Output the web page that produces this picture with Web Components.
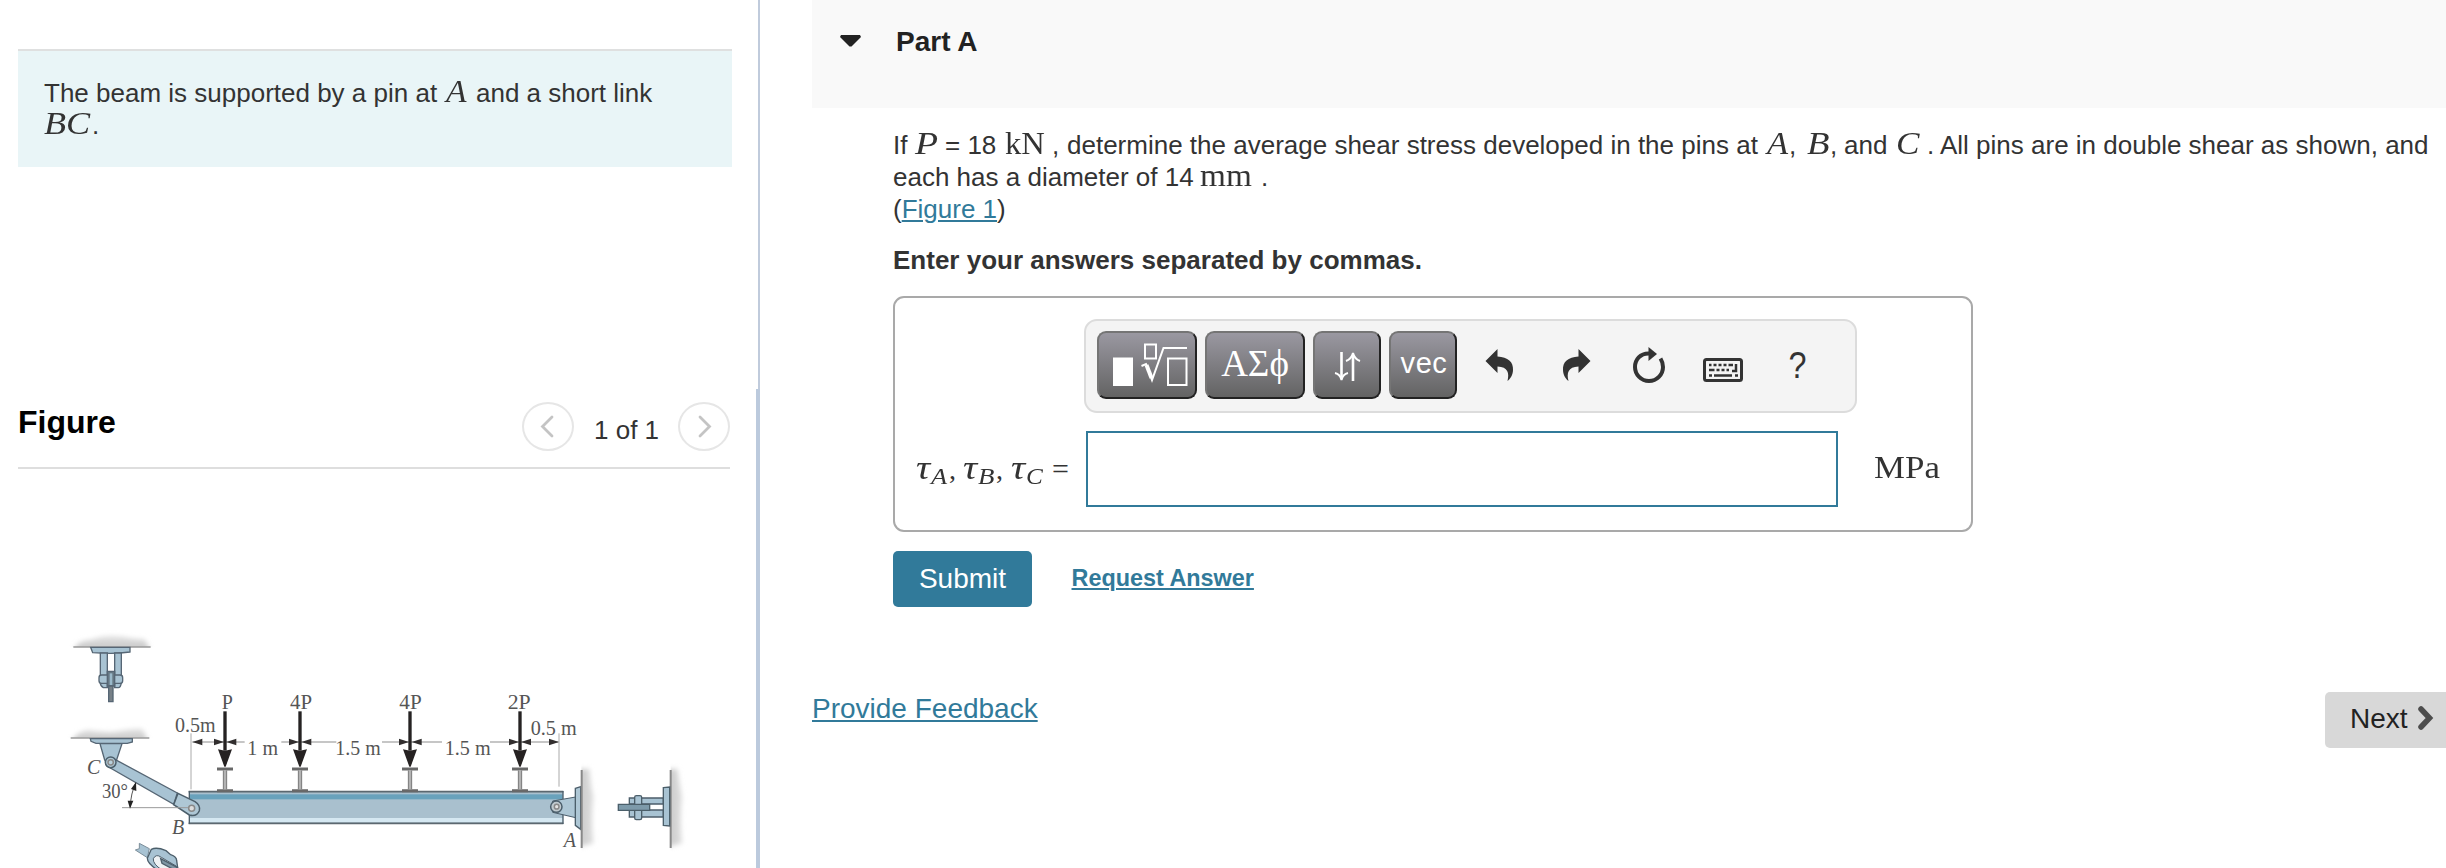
<!DOCTYPE html>
<html lang="en">
<head>
<meta charset="utf-8">
<title>Part A</title>
<style>
html,body{margin:0;padding:0;background:#fff}
body{width:2446px;height:868px;overflow:hidden;font-family:"Liberation Sans",Arial,sans-serif;font-size:26px;color:#333}
</style>
</head>
<body>
<problem-page></problem-page>
<script>
const def=(name,html,after)=>{
  const t=document.createElement('template');t.innerHTML=html;
  customElements.define(name,class extends HTMLElement{
    constructor(){super();this.attachShadow({mode:'open'}).append(t.content.cloneNode(true));}
    connectedCallback(){if(after)after(this);}
  });
};

/* Inline run with a fixed advance, optionally stretched (math symbols). */
def('math-run',`<style>
:host{display:inline-block;white-space:pre;line-height:0}
:host([m]) span{font-family:"Liberation Serif","Times New Roman",serif;font-size:32px}
:host([i]) span{font-style:italic}
span{display:inline-block;transform-origin:0 100%;line-height:0}
</style><span><slot></slot></span>`,el=>{
  el.style.width=el.getAttribute('w')+'px';
  const s=el.shadowRoot.querySelector('span');
  if(el.hasAttribute('x'))s.style.transform='scaleX('+el.getAttribute('x')+')';
  if(el.hasAttribute('s')){s.style.fontSize=el.getAttribute('s')+'px';el.style.fontSize=el.getAttribute('s')+'px';}
});

def('text-link',`<style>
:host{display:inline;color:#317a9a}
a{color:inherit;text-decoration:underline;text-decoration-thickness:2px;text-underline-offset:2px;text-decoration-skip-ink:auto}
</style><a><slot></slot></a>`);

def('intro-card',`<style>
:host{display:block;box-sizing:border-box;height:118px;margin:0 26px 0 18px;border-top:2px solid #dfe0e0;background:#e9f5f7;padding:26px 26px 0;line-height:32px}
div{height:32px;white-space:nowrap}
</style><div><slot name="one"></slot></div><div><slot name="two"></slot></div>`);

def('round-button',`<style>
:host{display:block;box-sizing:border-box;width:52px;height:49px;border:2px solid #e6e6e6;border-radius:50%}
:host([dir=next]) svg{transform:scaleX(-1)}
svg{display:block}
</style><svg width="48" height="45" viewBox="0 0 48 45"><path d="M28 13L18.500 22.500L28 32" fill="none" stroke="#c4c4c4" stroke-width="2.800" stroke-linecap="round"/></svg>`);

def('figure-header',`<style>
:host{display:flex;box-sizing:border-box;margin:0 26px 0 18px;height:67px;border-bottom:2px solid #dedede;align-items:flex-start}
h2{margin:2px 0 0;font-size:32px;line-height:37px;color:#000;flex:1}
span{margin:12px 19px 0 20px;line-height:32px;width:65px;white-space:nowrap}
</style><h2>Figure</h2><round-button></round-button><span>1 of 1</span><round-button dir="next"></round-button>`);

def('beam-figure',`<style>
:host{display:block;margin-left:40px;width:700px;height:248px;overflow:hidden}
svg{display:block}
text{font-family:"Liberation Serif","Times New Roman",serif;fill:#555;font-size:60px}
</style>
<svg width="700" height="248" viewBox="0 0 2100 744">
<defs>
<linearGradient id="fd" x1="0" y1="0" x2="0" y2="1"><stop offset="0" stop-color="#e4e4e4"/><stop offset="1" stop-color="#c2c2c2"/></linearGradient>
<linearGradient id="fr" x1="0" y1="0" x2="1" y2="0"><stop offset="0" stop-color="#c6c6c6"/><stop offset="1" stop-color="#dedede"/></linearGradient>
<filter id="soft" x="-5%" y="-5%" width="110%" height="110%"><feGaussianBlur stdDeviation="2"/></filter>
<filter id="haze" x="-40%" y="-60%" width="180%" height="220%"><feGaussianBlur stdDeviation="8"/></filter>
<g id="load">
<rect x="-5" y="274" width="10" height="118" fill="#262324"/><path d="M-21 388L0 392L21 388L2 440H-2Z" fill="#262324"/>
<path d="M-24 447H24M-24 512H24" stroke="#686868" stroke-width="9"/><path d="M0 451V508" stroke="#858585" stroke-width="13"/><path d="M0 451V508" stroke="#bcbcbc" stroke-width="5"/>
</g>
<path id="ar" d="M0 0L-30 -10V10Z" fill="#302e2e"/>
<path id="al" d="M0 0L30 -10V10Z" fill="#302e2e"/>
<clipPath id="c1"><rect x="60" y="0" width="310" height="81"/></clipPath>
<clipPath id="c2"><rect x="60" y="270" width="310" height="83"/></clipPath>
<clipPath id="c3"><rect x="1624" y="410" width="90" height="300"/></clipPath>
<clipPath id="c4"><rect x="1892" y="410" width="90" height="300"/></clipPath>
</defs>
<g clip-path="url(#c1)"><path filter="url(#haze)" d="M102 92Q112 60 150 60Q170 54 186 50Q215 46 250 50Q290 58 312 58Q322 66 328 92Z" fill="url(#fd)"/></g>
<g clip-path="url(#c2)"><path filter="url(#haze)" d="M96 366Q106 336 145 330Q190 338 220 336Q270 326 305 326Q318 340 322 366Z" fill="url(#fd)"/></g>
<g clip-path="url(#c3)"><path filter="url(#haze)" d="M1610 448L1648 446Q1652 500 1660 530Q1652 600 1660 670L1610 682Z" fill="url(#fr)"/></g>
<g clip-path="url(#c4)"><path filter="url(#haze)" d="M1878 448L1912 446Q1920 500 1926 530Q1918 600 1926 670L1878 682Z" fill="url(#fr)"/></g>
<g filter="url(#soft)">
<path d="M100 81H332M92 354H328" stroke="#999" stroke-width="4"/>
<g stroke="#566674" stroke-width="4" fill="#a8c3d3">
<path d="M152 82H270V96Q240 100 212 100T158 98Z"/>
<path d="M181 99H202V203H190Q181 198 181 188ZM224 99H244V188Q242 203 235 203H224Z"/>
<rect x="177" y="165" width="71" height="25" rx="8"/>
<path d="M202 154H224V198H202Z" fill="#657783"/><path d="M209 160H217V195H209Z" fill="#9ab9ca" stroke="none"/>
<path d="M206 198H219V245H206Z" fill="#778087"/>
<path d="M151 356H277V366L262 370H168L153 364Z"/>
<path d="M180 371H246L228 425Q218 440 202 433L194 420Z"/>
<path d="M219 415L412 519L401 553L206 441Z"/>
</g>
<rect x="448" y="515" width="1121" height="95" fill="#a9c0ce"/>
<rect x="448" y="523" width="1120" height="15" fill="#69a2bc"/><rect x="448" y="594" width="1120" height="13" fill="#d5e8f2"/>
<path d="M446 515H1570M446 610H1570" stroke="#5c686f" stroke-width="5"/>
<path d="M448 513V612M1569 513V612" stroke="#4c5e6b" stroke-width="4"/>
<g stroke="#4c5e6b" stroke-width="4.500" fill="#aec7d5">
<path d="M414 520L465 545Q482 556 478 572Q470 591 448 585L401 554Z"/>
<circle cx="455" cy="565" r="9" stroke="#888" fill="#ddd"/>
<circle cx="212" cy="427" r="16"/><circle cx="212" cy="427" r="8" fill="#b9d1dd" stroke="#888"/>
<path d="M1538 543L1607 531V593L1538 577Z" stroke-width="3"/>
<path d="M1606 505L1622 500V628L1606 616Z" stroke-width="4"/>
<circle cx="1549" cy="560" r="17" fill="#bfc9ce"/><circle cx="1550" cy="560" r="7" fill="#e4e4e4" stroke="#888"/>
</g>
<path d="M1625 450V684M1892 450V684" stroke="#888" stroke-width="6"/>
<g stroke="#4c5e6b" stroke-width="4" fill="#a8c3d3">
<path d="M1768 534H1870V552H1768ZM1768 570H1870V591H1768Z"/>
<rect x="1784" y="527" width="21" height="72" rx="5"/>
<path d="M1735 553H1829V571H1735Z" fill="#7d9aaa"/>
<path d="M1870 503L1889 501V618L1870 616Z"/>
</g>
<path d="M298 670L328 686L322 713L286 690L298 686Z" fill="#a8c3d3" stroke="#7b8d99" stroke-width="3"/>
<g stroke="#4c5e6b" stroke-width="4" fill="#a8c3d3">
<path d="M334 688Q350 680 378 692L392 704Q410 710 410 722L414 750H352Q322 730 322 715Z"/>
<path d="M340 716Q348 700 364 712L408 738V750H366Q338 732 340 716Z" fill="#eef2f4" stroke-width="3"/>
<path d="M362 716L412 742L404 750L366 730Z" fill="#7e96a4"/>
</g>
<path d="M453 340V508M1557 340V500" stroke="#aaa" stroke-width="3"/>
<path d="M246 563H445" stroke="#999" stroke-width="3"/><path d="M288 488Q272 520 271 560" stroke="#555" stroke-width="3" fill="none"/>
<path d="M288 486L289 513L273 507ZM270 566L263 542L280 542Z" fill="#222"/>
<path d="M457 366H614M724 366H889M1026 366H1206M1350 366H1555" stroke="#8d8d8d" stroke-width="3"/>
<use href="#load" x="555"/><use href="#load" x="780"/><use href="#load" x="1110"/><use href="#load" x="1440"/>
<use href="#al" x="457" y="366"/><use href="#ar" x="552" y="366"/><use href="#al" x="559" y="366"/><use href="#ar" x="777" y="366"/><use href="#al" x="784" y="366"/><use href="#ar" x="1107" y="366"/><use href="#al" x="1115" y="366"/><use href="#ar" x="1437" y="366"/><use href="#al" x="1443" y="366"/><use href="#ar" x="1557" y="366"/>
</g>
<g>
<text x="545" y="266">P</text><text x="750" y="266" textLength="66" lengthAdjust="spacingAndGlyphs">4P</text><text x="1078" y="266" textLength="67" lengthAdjust="spacingAndGlyphs">4P</text><text x="1403" y="266" textLength="69" lengthAdjust="spacingAndGlyphs">2P</text>
<text x="405" y="335" textLength="122" lengthAdjust="spacingAndGlyphs">0.5m</text><text x="622" y="405" textLength="92" lengthAdjust="spacingAndGlyphs">1 m</text><text x="886" y="405" textLength="136" lengthAdjust="spacingAndGlyphs">1.5 m</text><text x="1214" y="405" textLength="138" lengthAdjust="spacingAndGlyphs">1.5 m</text><text x="1472" y="344" textLength="138" lengthAdjust="spacingAndGlyphs">0.5 m</text>
<text x="141" y="463" font-style="italic">C</text><text x="186" y="535" textLength="78" lengthAdjust="spacingAndGlyphs">30°</text><text x="396" y="643" font-style="italic">B</text><text x="1571" y="681" font-style="italic">A</text>
</g>
</svg>`);

def('left-pane',`<style>
:host{display:flex;flex-direction:column;box-sizing:border-box;width:760px;height:868px}
.top{box-sizing:border-box;height:389px;border-right:2px solid #c0cbdc;padding-top:49px}
.bottom{box-sizing:border-box;height:479px;border-right:4px solid #bccadd;padding-top:13px}
beam-figure{margin-top:151px}
</style>
<div class="top"><intro-card><span slot="one"><math-run w="402">The beam is supported by a pin at</math-run><math-run m i w="30" x="1.050">A</math-run><span>and a short link</span></span><span slot="two"><math-run m i w="48" x="1.130">BC</math-run>.</span></intro-card></div>
<div class="bottom"><figure-header></figure-header><beam-figure></beam-figure></div>`);

def('part-header',`<style>
:host{display:flex;box-sizing:border-box;height:108px;background:#f9f9f9;padding:26px 0 0 28px;font-size:28px;font-weight:bold;color:#222;line-height:32px}
svg{margin:9px 35px 0 0;display:block}
</style><svg width="21" height="12" viewBox="0 0 21 12"><path d="M1 0H20L21 2L11.500 11.500H9.500L0 2Z" fill="#222"/></svg><slot></slot>`);

def('question-text',`<style>
:host{display:block;padding:21px 0 0 81px;line-height:32px;white-space:nowrap}
div{height:32px}
b{display:block;margin-top:19px;height:32px}
</style>
<div><math-run w="22">If</math-run><math-run m i w="30" x="1.180">P</math-run><math-run w="60">= 18</math-run><math-run m w="47" x="1.020">kN</math-run><math-run w="15">,</math-run><math-run w="700">determine the average shear stress developed in the pins at</math-run><math-run m i w="22" x="1.080">A</math-run><math-run w="18">,</math-run><math-run m i w="23" x="1.150">B</math-run><math-run w="14">,</math-run><math-run w="52">and</math-run><math-run m i w="31" x="1.100">C</math-run><math-run w="13">.</math-run><span>All pins are in double shear as shown, and</span></div>
<div><math-run w="307">each has a diameter of 14</math-run><math-run m w="61" x="1.040">mm</math-run>.</div>
<div>(<text-link>Figure 1</text-link>)</div>
<b>Enter your answers separated by commas.</b>`);

def('tool-button',`<style>
:host{display:flex;box-sizing:border-box;height:68px;width:68px;border:2px solid;border-color:#757575 #222 #222 #757575;border-radius:9px;background:linear-gradient(#9a98a1,#636363);color:#fff;align-items:center;justify-content:center;flex:none}
:host([wide]){width:100px}
</style><slot></slot>`);

def('tool-bar',`<style>
:host{display:flex;box-sizing:border-box;width:773px;height:94px;margin-left:189px;border:2px solid #dcdcdc;border-radius:13px;background:#f4f4f4;padding:10px 0 0 11px;gap:8px}
svg{display:block}
.gr{font-family:"Liberation Serif",serif;font-size:37px;line-height:38px;margin-top:-2px}
.vec{font-size:29px;letter-spacing:.6px;line-height:30px;margin-top:-5px;margin-left:2px}
.icons{margin-left:-8px}
</style>
<tool-button wide><svg width="96" height="64" viewBox="0 0 96 64"><rect x="14" y="24.500" width="20" height="28.500" fill="#fff"/><g fill="none" stroke="#fff" stroke-width="2"><rect x="46" y="11.500" width="11" height="14"/><rect x="69" y="25.500" width="18.500" height="26.500"/><path d="M42.500 33L47 31L53 47L64.500 15H88"/><path d="M47.500 32L52.500 45" stroke-width="4"/></g></svg></tool-button>
<tool-button wide><span class="gr">ΑΣϕ</span></tool-button>
<tool-button><svg width="64" height="64" viewBox="0 0 64 64"><g fill="none" stroke="#fff" stroke-width="2.600"><path d="M26.500 19V46M38 22V48"/><path d="M20 40Q25 41 26.500 47Q28 41 33 40M31 28Q36.500 26 38 20Q39.500 26 45 28" stroke-width="2"/></g></svg></tool-button>
<tool-button><span class="vec">vec</span></tool-button>
<svg class="icons" width="388" height="68" viewBox="1457 331 388 68"><g fill="#333">
<path d="M1485.500 361L1497.500 349V356.500C1508 357 1513.500 362 1513 370C1513 375 1510 379 1507.500 381C1509.500 373 1508 367 1497.500 366.500V373Z"/>
<path d="M1590.500 361L1578.500 349V356.500C1568 357 1562.500 362 1563 370C1563 375 1566 379 1568.500 381C1566.500 373 1568 367 1578.500 366.500V373Z"/>
<path d="M1648.500 347L1657 354L1648.500 361Z"/></g>
<path d="M1649.500 353.500C1640 353 1635 360 1635 367A14 14 0 0 0 1663 367Q1663 362.500 1660.500 358.500" fill="none" stroke="#333" stroke-width="4"/>
<rect x="1704.500" y="359.500" width="37" height="21" rx="2" fill="none" stroke="#333" stroke-width="3"/>
<path d="M1709 365H1733M1709 370H1729M1709 375.500H1712M1714 375.500H1732M1735 375.500H1738" fill="none" stroke="#333" stroke-width="2.400"/>
<path d="M1712.500 362V368M1717.500 362V368M1722.500 362V368M1727.500 362V368M1715.500 368V372M1720.500 368V372M1725.500 368V372" stroke="#f4f4f4" stroke-width="2"/><path d="M1736 364V371H1732" fill="none" stroke="#333" stroke-width="2.500"/>
<text x="1788.500" y="377.500" textLength="18" lengthAdjust="spacingAndGlyphs" font-size="36" fill="#333">?</text>
</svg>`);

def('answer-box',`<style>
:host{display:block;box-sizing:border-box;margin:20px 0 0 81px;width:1080px;height:236px;border:2px solid #a9a9a9;border-radius:11px;padding-top:21px}
.row{display:flex;margin-top:18px}
.label{width:191px;box-sizing:border-box;padding:22px 0 0 21px;white-space:nowrap;line-height:32px;font-family:"Liberation Serif",serif;font-size:30px}
.field{box-sizing:border-box;width:752px;height:76px;border:2px solid #317a9a;background:#fff}
.unit{padding:22px 0 0 36px;line-height:32px}
.sub{position:relative;top:5px}
</style>
<tool-bar></tool-bar>
<div class="row"><div class="label"><math-run m i s="33" w="15" x="1.200">τ</math-run><math-run class="sub" m i s="24" w="18" x="1.100">A</math-run><math-run m w="14" s="28">,</math-run><math-run m i s="33" w="15" x="1.200">τ</math-run><math-run class="sub" m i s="24" w="18" x="1.120">B</math-run><math-run m w="15" s="28">,</math-run><math-run m i s="33" w="15" x="1.200">τ</math-run><math-run class="sub" m i s="24" w="26" x="1.050">C</math-run><math-run m w="18" s="30">=</math-run></div><div class="field"></div><div class="unit"><math-run m w="66" x="1.090">MPa</math-run></div></div>`);

def('action-row',`<style>
:host{display:flex;margin:19px 0 0 81px;height:56px}
.submit{width:139px;height:56px;border-radius:5px;background:#317a9a;color:#fff;font-size:28px;line-height:56px;text-align:center}
.req{margin:14px 0 0 39.500px;font-size:23.400px;font-weight:bold;line-height:27px}
</style><div class="submit">Submit</div><div class="req"><text-link>Request Answer</text-link></div>`);

def('page-footer',`<style>
:host{display:flex;margin-top:85px;height:56px;font-size:28px}
.fb{flex:1;padding-top:1px;line-height:32px}
.next{box-sizing:border-box;width:121px;height:56px;border-radius:5px 0 0 5px;background:#d8d8d8;color:#222;display:flex;padding-left:25px;line-height:54px}
svg{display:block;margin:13px 0 0 9px}
</style><div class="fb"><text-link>Provide Feedback</text-link></div><div class="next">Next<svg width="17" height="26" viewBox="0 0 17 26"><path d="M4 4L12.500 13L4 22" fill="none" stroke="#4d4d4d" stroke-width="5.500" stroke-linecap="round"/></svg></div>`);

def('right-pane',`<style>:host{display:block;width:1634px;margin-left:52px}</style>
<part-header>Part A</part-header><question-text></question-text><answer-box></answer-box><action-row></action-row><page-footer></page-footer>`);

def('problem-page',`<style>:host{display:flex;width:2446px;height:868px;overflow:hidden}</style><left-pane></left-pane><right-pane></right-pane>`);
</script>
</body>
</html>
